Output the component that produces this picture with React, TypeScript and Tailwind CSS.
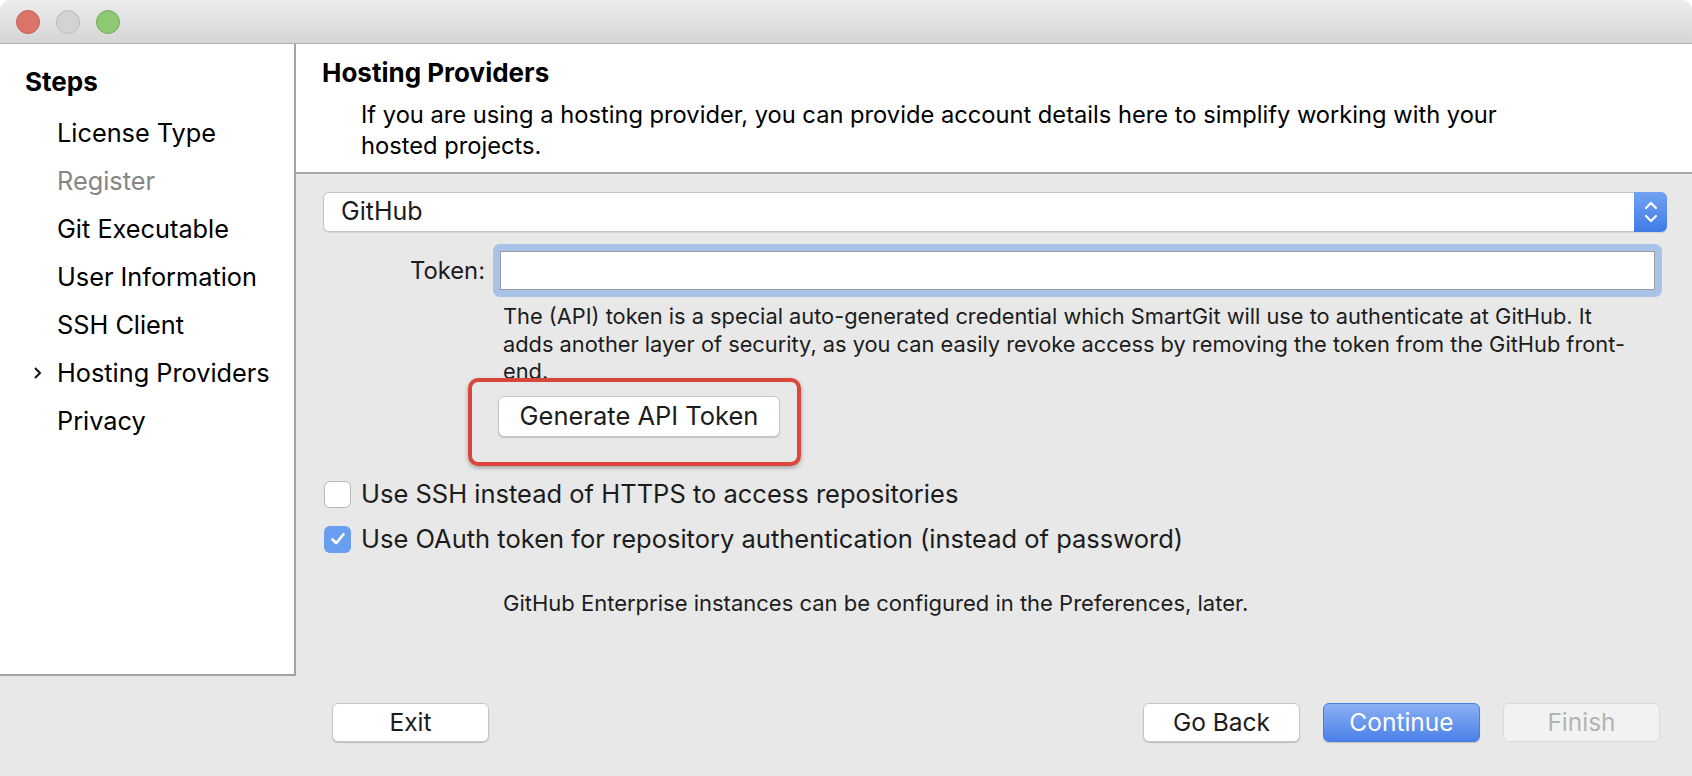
import React from 'react';

const steps = [
  { label: 'License Type', muted: false, current: false },
  { label: 'Register', muted: true, current: false },
  { label: 'Git Executable', muted: false, current: false },
  { label: 'User Information', muted: false, current: false },
  { label: 'SSH Client', muted: false, current: false },
  { label: 'Hosting Providers', muted: false, current: true },
  { label: 'Privacy', muted: false, current: false },
];

const TrafficLights = () => (
  <div className="flex items-center gap-[16px] pl-[16px]">
    <span className="w-[24px] h-[24px] rounded-full bg-[#dc7369] border border-[#c45e55]" />
    <span className="w-[24px] h-[24px] rounded-full bg-[#d3d3d3] border border-[#bcbcbc]" />
    <span className="w-[24px] h-[24px] rounded-full bg-[#8ec872] border border-[#76ad5c]" />
  </div>
);

const Checkbox = ({ checked }: { checked: boolean }) =>
  checked ? (
    <span className="w-[27px] h-[27px] rounded-[6px] bg-[#6a9ef0] flex items-center justify-center shrink-0">
      <svg width="18" height="18" viewBox="0 0 18 18">
        <path d="M3.5 9.5 L7.2 13.2 L14.5 4.2" fill="none" stroke="white" strokeWidth="2.6" strokeLinecap="round" strokeLinejoin="round" />
      </svg>
    </span>
  ) : (
    <span className="w-[27px] h-[27px] rounded-[6px] bg-white border border-[#b9b9b9] shrink-0" />
  );

const MacButton = ({ label, variant = 'default' }: { label: string; variant?: 'default' | 'primary' | 'disabled' }) => {
  const styles: Record<string, string> = {
    default: 'bg-white border border-[#c6c6c6] text-[#1c1c1c] shadow-[0_1px_1px_rgba(0,0,0,0.18)]',
    primary: 'bg-gradient-to-b from-[#8bb0f2] to-[#4b80e9] border border-[#4a7ee0] text-white shadow-[0_1px_1px_rgba(0,0,0,0.18)]',
    disabled: 'bg-[#f2f2f2] border border-[#dadada] text-[#b3b3b3]',
  };
  return (
    <button className={`w-[157px] h-[39px] rounded-[6px] text-[24.5px] leading-none flex items-center justify-center ${styles[variant]}`}>
      {label}
    </button>
  );
};

export default function App() {
  return (
    <div className="w-[1692px] h-[776px] bg-[#e8e8e8] flex flex-col rounded-t-[10px] overflow-hidden font-['Inter',sans-serif] text-[#1c1c1c]">
      <div className="h-[44px] shrink-0 flex items-center bg-gradient-to-b from-[#ededed] to-[#d5d5d5] border-b border-[#b1b1b1]">
        <TrafficLights />
      </div>

      <div className="flex h-[632px] shrink-0">
        <aside className="w-[296px] shrink-0 bg-white border-r-2 border-b-2 border-[#a3a3a3] pt-[23px]">
          <div className="pl-[25px] text-[26px] leading-[30px] font-bold text-black">Steps</div>
          <ul className="mt-[12px]">
            {steps.map((s) => (
              <li key={s.label} className="flex items-center h-[48px] pl-[25px]">
                <span className="w-[32px] flex items-center pl-[8px]">
                  {s.current && (
                    <svg width="9" height="14" viewBox="0 0 9 14">
                      <path d="M2 2 L7 7 L2 12" fill="none" stroke="#111" strokeWidth="2" />
                    </svg>
                  )}
                </span>
                <span className={`text-[25.3px] ${s.muted ? 'text-[#858585]' : 'text-black'}`}>{s.label}</span>
              </li>
            ))}
          </ul>
        </aside>

        <main className="flex-1 flex flex-col">
          <header className="h-[130px] shrink-0 bg-white border-b-2 border-[#a8a8a8] pt-[13px]">
            <h1 className="pl-[26px] text-[26px] leading-[32px] font-bold text-black">Hosting Providers</h1>
            <p className="pl-[65px] mt-[10px] text-[23.7px] leading-[31px] text-black whitespace-nowrap">
              If you are using a hosting provider, you can provide account details here to simplify working with your
              <br />
              hosted projects.
            </p>
          </header>

          <section className="pt-[18px] pl-[27px] pr-[25px]">
            <div className="h-[40px] flex bg-white border border-[#c3c3c3] rounded-[6px] shadow-[0_1px_1px_rgba(0,0,0,0.1)]">
              <div className="flex-1 flex items-center pl-[17px] text-[25px] text-[#1c1c1c]">GitHub</div>
              <div className="w-[33px] -my-px -mr-px rounded-r-[6px] bg-gradient-to-b from-[#72a2f1] to-[#3f7ae6] flex items-center justify-center">
                <svg width="16" height="26" viewBox="0 0 16 26">
                  <path d="M3 9 L8 4 L13 9" fill="none" stroke="white" strokeWidth="2.2" strokeLinecap="round" strokeLinejoin="round" />
                  <path d="M3 17 L8 22 L13 17" fill="none" stroke="white" strokeWidth="2.2" strokeLinecap="round" strokeLinejoin="round" />
                </svg>
              </div>
            </div>

            <div className="flex items-center mt-[12px]">
              <label className="w-[162px] text-right text-[23.8px] text-[#1c1c1c]">Token:</label>
              <div className="ml-[8px] w-[1169px] p-[7px] rounded-[7px] bg-[#a9c2e7]">
                <div className="h-[39px] bg-white border border-[#9c9c9c]" />
              </div>
            </div>

            <p className="ml-[180px] mt-[6px] text-[21.8px] leading-[27.5px] text-[#1c1c1c] whitespace-nowrap">
              The (API) token is a special auto-generated credential which SmartGit will use to authenticate at GitHub. It
              <br />
              adds another layer of security, as you can easily revoke access by removing the token from the GitHub front-
              <br />
              end.
            </p>

            <div className="relative ml-[175px] mt-[10px] w-[282px]">
              <button className="w-[282px] h-[41px] bg-white border border-[#c6c6c6] rounded-[6px] text-[25.5px] text-[#1c1c1c] shadow-[0_1px_1px_rgba(0,0,0,0.18)]">
                Generate API Token
              </button>
              <div className="absolute left-[-30px] top-[-18px] w-[333px] h-[88px] border-[4px] border-[#d8473a] rounded-[10px] shadow-[0_2px_4px_rgba(0,0,0,0.3)]" />
            </div>

            <div className="mt-[44px] ml-[1px] flex flex-col gap-[18px]">
              <div className="flex items-center gap-[10px] h-[27px]">
                <Checkbox checked={false} />
                <span className="text-[25.5px] text-[#1c1c1c]">Use SSH instead of HTTPS to access repositories</span>
              </div>
              <div className="flex items-center gap-[10px] h-[27px]">
                <Checkbox checked />
                <span className="text-[25.5px] text-[#1c1c1c]">Use OAuth token for repository authentication (instead of password)</span>
              </div>
            </div>

            <p className="ml-[180px] mt-[36px] text-[22px] leading-[28px] text-[#1c1c1c] whitespace-nowrap">
              GitHub Enterprise instances can be configured in the Preferences, later.
            </p>
          </section>
        </main>
      </div>

      <footer className="flex-1 flex items-start justify-between pt-[27px] pl-[332px] pr-[32px]">
        <MacButton label="Exit" />
        <div className="flex gap-[23px]">
          <MacButton label="Go Back" />
          <MacButton label="Continue" variant="primary" />
          <MacButton label="Finish" variant="disabled" />
        </div>
      </footer>
    </div>
  );
}
